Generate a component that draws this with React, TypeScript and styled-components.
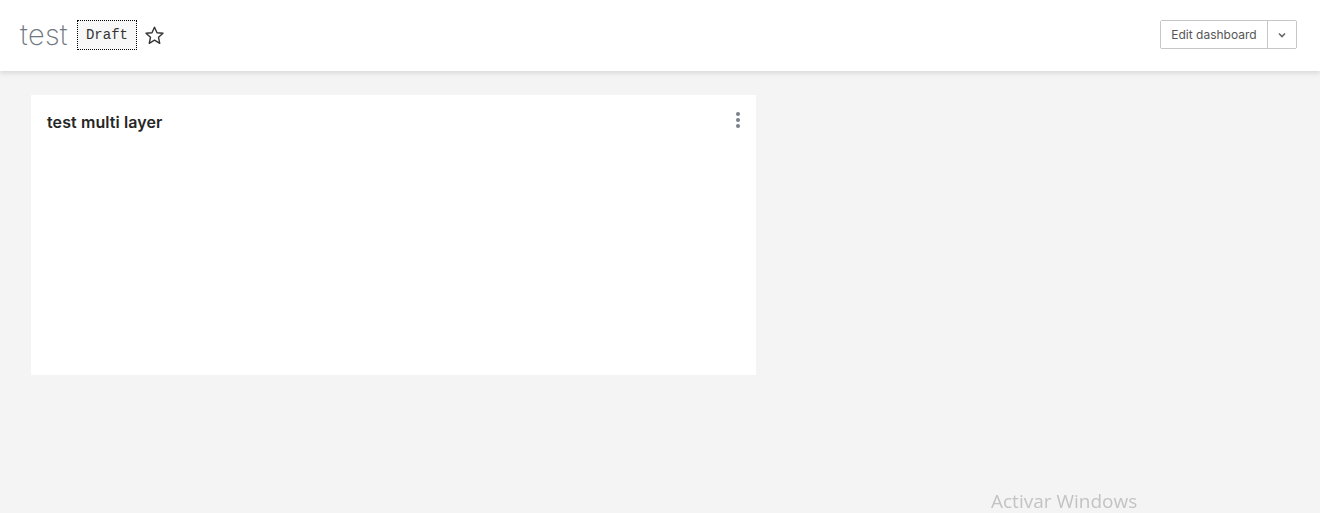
import React from 'react';
import styled, { createGlobalStyle } from 'styled-components';

const GlobalStyle = createGlobalStyle`
	html, body {
		margin: 0;
		padding: 0;
		background: #f4f4f4;
		font-family: 'Inter', 'Liberation Sans', sans-serif;
	}
	* {
		box-sizing: border-box;
	}
`;

const Page = styled.div`
	min-height: 513px;
	background: #f4f4f4;
`;

const Header = styled.header`
	height: 71px;
	background: #fff;
	display: flex;
	align-items: center;
	justify-content: space-between;
	padding: 0 23px 0 20px;
	box-shadow: 0 2px 5px rgba(0, 0, 0, 0.12);
	position: relative;
	z-index: 1;
`;

const TitleGroup = styled.div`
	display: flex;
	align-items: center;
`;

const Title = styled.h1`
	margin: 0 9px 2px 0;
	font-size: 29px;
	font-weight: 200;
	color: #6f7780;
	letter-spacing: 0.3px;
`;

const Badge = styled.span`
	display: inline-flex;
	align-items: center;
	justify-content: center;
	width: 60px;
	height: 30px;
	background: #f7f7f7;
	border: 1px dotted #000;
	font-family: 'Liberation Mono', 'DejaVu Sans Mono', monospace;
	font-size: 14px;
	color: #333;
	margin-bottom: 1px;
`;

const StarButton = styled.button`
	border: none;
	background: none;
	padding: 0;
	margin-left: 7px;
	display: flex;
	color: #333;
`;

const Split = styled.div`
	display: flex;
	height: 29px;
	border: 1px solid #c6c6c6;
	border-radius: 2px;
	margin-bottom: 2px;
`;

const SplitMain = styled.button`
	border: none;
	background: #fff;
	width: 107px;
	font-family: 'Inter', 'Liberation Sans', sans-serif;
	font-size: 12px;
	color: #555;
	border-right: 1px solid #c6c6c6;
	padding: 0;
`;

const SplitCaret = styled.button`
	border: none;
	background: #fff;
	width: 28px;
	display: flex;
	align-items: center;
	justify-content: center;
	padding: 0;
	color: #666;
`;

const Grid = styled.main`
	padding: 24px 31px;
	display: grid;
	grid-template-columns: 725px;
`;

const Card = styled.section`
	background: #fff;
	height: 280px;
	padding: 16px 15px 0 16px;
	display: flex;
	justify-content: space-between;
	align-items: flex-start;
`;

const CardTitle = styled.h2`
	margin: 1px 0 0;
	font-size: 16px;
	font-weight: 600;
	color: #262626;
	letter-spacing: 0.1px;
`;

const MenuButton = styled.button`
	border: none;
	background: none;
	padding: 0;
	display: flex;
	color: #7a8189;
`;

const Watermark = styled.div`
	position: fixed;
	left: 991px;
	top: 488px;
	font-family: 'Open Sans', 'Liberation Sans', sans-serif;
	font-size: 19px;
	color: #c3c3c3;
	pointer-events: none;
`;

function Star() {
	return (
		<svg width="21" height="21" viewBox="0 0 24 24" fill="none" stroke="currentColor" strokeWidth="1.6" strokeLinejoin="round">
			<polygon points="12,2.5 14.9,8.8 21.7,9.5 16.6,14.1 18,20.9 12,17.4 6,20.9 7.4,14.1 2.3,9.5 9.1,8.8" />
		</svg>
	);
}

function Chevron() {
	return (
		<svg width="10" height="10" viewBox="0 0 10 10" fill="none" stroke="currentColor" strokeWidth="1.6">
			<polyline points="2,3.5 5,6.5 8,3.5" />
		</svg>
	);
}

function Dots() {
	return (
		<svg width="6" height="18" viewBox="0 0 6 18" fill="currentColor">
			<circle cx="3" cy="3" r="2" />
			<circle cx="3" cy="9" r="2" />
			<circle cx="3" cy="15" r="2" />
		</svg>
	);
}

export default function App() {
	return (
		<Page>
			<GlobalStyle />
			<Header>
				<TitleGroup>
					<Title>test</Title>
					<Badge>Draft</Badge>
					<StarButton>
						<Star />
					</StarButton>
				</TitleGroup>
				<Split>
					<SplitMain>Edit dashboard</SplitMain>
					<SplitCaret>
						<Chevron />
					</SplitCaret>
				</Split>
			</Header>
			<Grid>
				<Card>
					<CardTitle>test multi layer</CardTitle>
					<MenuButton>
						<Dots />
					</MenuButton>
				</Card>
			</Grid>
			<Watermark>Activar Windows</Watermark>
		</Page>
	);
}
